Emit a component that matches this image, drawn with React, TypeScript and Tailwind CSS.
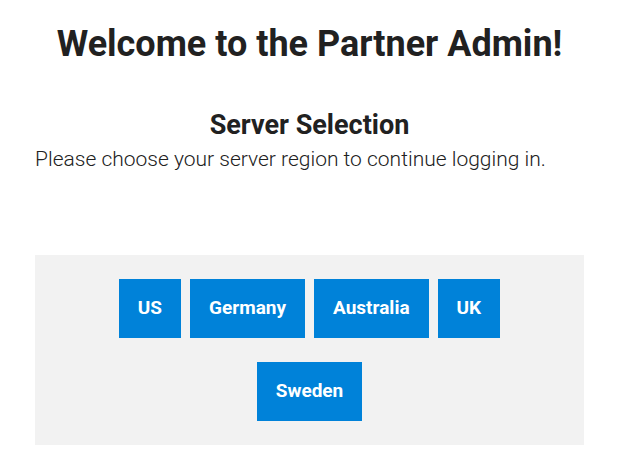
export default function App() {
  const regions = ["US", "Germany", "Australia", "UK", "Sweden"];
  return (
    <div className="w-[625px] h-[460px] bg-white text-[#212121]" style={{ fontFamily: "Roboto, sans-serif" }}>
      <div className="ml-[35px] w-[549px] pt-[22px]">
        <h1 className="text-center text-[36px] font-bold leading-[44px]">Welcome to the Partner Admin!</h1>
        <h2 className="mt-[43px] text-center text-[27px] font-bold leading-[32px]">Server Selection</h2>
        <p className="mt-[4px] text-[21px] font-light leading-[28px]">Please choose your server region to continue logging in.</p>
        <div className="mt-[82px] bg-[#f2f2f2] py-[24px] px-[54px] flex flex-wrap justify-center gap-x-[9px] gap-y-[24px]">
          {regions.map((r) => (
            <button key={r} className="h-[59px] px-[19px] bg-[#0082d9] text-white text-[19px] font-bold">
              {r}
            </button>
          ))}
        </div>
      </div>
    </div>
  );
}
